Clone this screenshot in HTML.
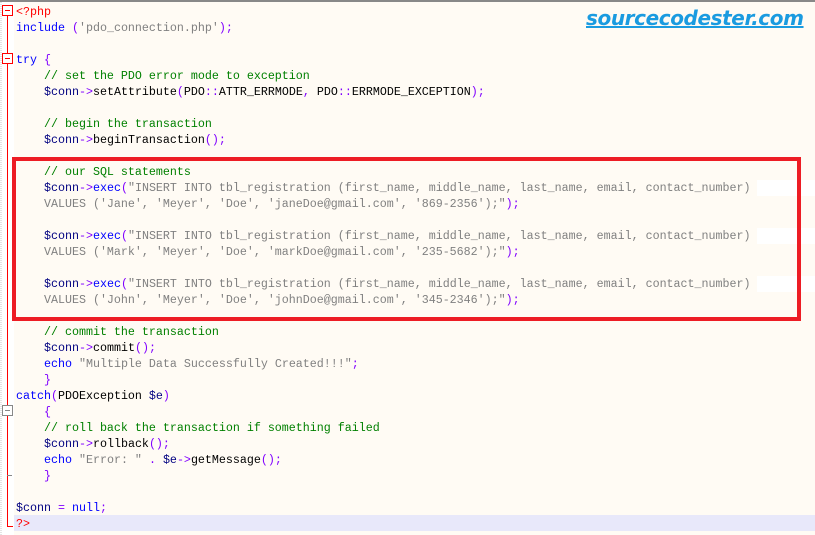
<!DOCTYPE html>
<html><head><meta charset="utf-8"><style>
*{margin:0;padding:0}
body{width:815px;height:535px;overflow:hidden;background:#fffbf4;position:relative;font-family:"Liberation Mono","Courier New",monospace;font-size:11.67px}
#top{position:absolute;left:0;top:0;width:815px;height:2px;background:#888}
#margin{position:absolute;left:0;top:2px;width:14px;height:533px;background:#fff;background-image:repeating-linear-gradient(0deg,#e4e4e4 0 1px,#fff 1px 2px);}
#margin2{position:absolute;left:2px;top:2px;width:12px;height:533px;background:#fff}
.l{position:absolute;left:16px;height:16px;line-height:16px;white-space:pre;color:#000}
.k{color:#0000ff}.v{color:#000080}.o{color:#8000ff}.s{color:#808080}.c{color:#008000}.r{color:#ff0000}
.fold{position:absolute;left:2px;width:9px;height:9px;border:1px solid #f00;background:#fff}
.fold:after{content:"";position:absolute;left:2px;top:4px;width:5px;height:1px;background:#f00}
.g{border-color:#888}.g:after{background:#888}
#vl{position:absolute;left:7px;top:16px;width:1px;height:511px;background:#f00}
#box{position:absolute;left:12px;top:157px;width:781px;height:156px;border:4px solid #ed1c24}
.w{position:absolute;left:757px;width:58px;height:16px;background:#fff}
</style></head><body>
<div id="top"></div>
<div id="margin"></div><div id="margin2"></div>
<div id="vl"></div>
<div style="position:absolute;left:7px;top:526px;width:6px;height:1px;background:#f00"></div>
<div style="position:absolute;left:7px;top:475px;width:5px;height:1px;background:#888"></div>
<div style="position:absolute;left:14px;top:515px;width:801px;height:16px;background:#e8e8fa"></div>
<div class="fold" style="top:5px"></div>
<div class="fold" style="top:53px"></div>
<div class="fold g" style="top:405px"></div>
<div class="w" style="top:180px"></div><div class="w" style="top:228px"></div><div class="w" style="top:276px"></div>
<div style="position:absolute;left:586px;top:6px;font-family:'DejaVu Sans',sans-serif;font-style:italic;font-weight:bold;font-size:20px;color:#1a9be0;text-decoration:underline;letter-spacing:-0.4px">sourcecodester.com</div>

<div class="l r" style="top:4px">&lt;?php</div>
<div class="l" style="top:20px"><span class="k">include</span> <span class="o">(</span><span class="s">'pdo_connection.php'</span><span class="o">);</span></div>
<div class="l" style="top:52px"><span class="k">try</span> <span class="o">{</span></div>
<div class="l c" style="top:68px">    // set the PDO error mode to exception</div>
<div class="l" style="top:84px">    <span class="v">$conn</span><span class="o">-&gt;</span>setAttribute<span class="o">(</span>PDO<span class="o">::</span>ATTR_ERRMODE<span class="o">,</span> PDO<span class="o">::</span>ERRMODE_EXCEPTION<span class="o">);</span></div>
<div class="l c" style="top:116px">    // begin the transaction</div>
<div class="l" style="top:132px">    <span class="v">$conn</span><span class="o">-&gt;</span>beginTransaction<span class="o">();</span></div>
<div class="l c" style="top:164px">    // our SQL statements</div>
<div class="l" style="top:180px">    <span class="v">$conn</span><span class="o">-&gt;</span><span class="k">exec</span><span class="o">(</span><span class="s">"INSERT INTO tbl_registration (first_name, middle_name, last_name, email, contact_number)</span></div>
<div class="l s" style="top:196px">    VALUES ('Jane', 'Meyer', 'Doe', 'janeDoe@gmail.com', '869-2356');"<span class="o">);</span></div>
<div class="l" style="top:228px">    <span class="v">$conn</span><span class="o">-&gt;</span><span class="k">exec</span><span class="o">(</span><span class="s">"INSERT INTO tbl_registration (first_name, middle_name, last_name, email, contact_number)</span></div>
<div class="l s" style="top:244px">    VALUES ('Mark', 'Meyer', 'Doe', 'markDoe@gmail.com', '235-5682');"<span class="o">);</span></div>
<div class="l" style="top:276px">    <span class="v">$conn</span><span class="o">-&gt;</span><span class="k">exec</span><span class="o">(</span><span class="s">"INSERT INTO tbl_registration (first_name, middle_name, last_name, email, contact_number)</span></div>
<div class="l s" style="top:292px">    VALUES ('John', 'Meyer', 'Doe', 'johnDoe@gmail.com', '345-2346');"<span class="o">);</span></div>
<div class="l c" style="top:324px">    // commit the transaction</div>
<div class="l" style="top:340px">    <span class="v">$conn</span><span class="o">-&gt;</span>commit<span class="o">();</span></div>
<div class="l" style="top:356px">    <span class="k">echo</span> <span class="s">"Multiple Data Successfully Created!!!"</span><span class="o">;</span></div>
<div class="l o" style="top:372px">    }</div>
<div class="l" style="top:388px"><span class="k">catch</span><span class="o">(</span>PDOException <span class="v">$e</span><span class="o">)</span></div>
<div class="l o" style="top:404px">    {</div>
<div class="l c" style="top:420px">    // roll back the transaction if something failed</div>
<div class="l" style="top:436px">    <span class="v">$conn</span><span class="o">-&gt;</span>rollback<span class="o">();</span></div>
<div class="l" style="top:452px">    <span class="k">echo</span> <span class="s">"Error: "</span> <span class="o">.</span> <span class="v">$e</span><span class="o">-&gt;</span>getMessage<span class="o">();</span></div>
<div class="l o" style="top:468px">    }</div>
<div class="l" style="top:500px"><span class="v">$conn</span> <span class="o">=</span> <span class="k">null</span><span class="o">;</span></div>
<div class="l r" style="top:516px">?&gt;</div>
<div id="box"></div>
</body></html>
